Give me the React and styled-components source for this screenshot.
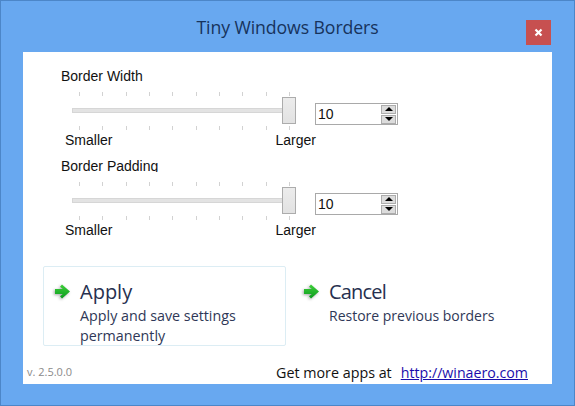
import React from "react";
import styled, { createGlobalStyle } from "styled-components";

const GlobalStyle = createGlobalStyle`
  html, body {
    margin: 0;
    padding: 0;
    background: #68a8f0;
  }
  * {
    box-sizing: border-box;
  }
`;

const Window = styled.div`
  width: 575px;
  height: 406px;
  background: #68a8f0;
  border: 1px solid #4c86c8;
  padding: 0 22px 21px 22px;
  display: flex;
  flex-direction: column;
`;

const TitleBar = styled.header`
  height: 51px;
  flex: none;
  display: grid;
  grid-template-columns: 1fr auto 1fr;
  align-items: center;
`;

const Title = styled.h1`
  grid-column: 2;
  margin: 0;
  padding-top: 1px;
  font-family: "Open Sans", "Noto Sans", sans-serif;
  font-size: 17.7px;
  font-weight: 400;
  color: #17335c;
  letter-spacing: -0.1px;
`;

const CloseButton = styled.button`
  grid-column: 3;
  justify-self: end;
  align-self: end;
  width: 25px;
  height: 25px;
  margin: 0 1px 7px 0;
  padding: 0;
  border: none;
  background: #c75050;
  display: flex;
  align-items: center;
  justify-content: center;
`;

const Panel = styled.main`
  flex: 1;
  background: #fff;
  padding: 16px 0 0 38px;
  display: flex;
  flex-direction: column;
`;

const Group = styled.section`
  height: ${(p) => (p.$last ? "91px" : "90px")};
  flex: none;
  display: flex;
  flex-direction: column;
`;

const GroupLabel = styled.div`
  height: ${(p) => (p.$clip ? "14px" : "17px")};
  margin-bottom: ${(p) => (p.$clip ? "3px" : "0")};
  overflow: hidden;
  font-family: "Liberation Sans", Arial, sans-serif;
  font-size: 14px;
  line-height: 16px;
  color: #111;
`;

const SliderRow = styled.div`
  display: flex;
  align-items: flex-start;
  margin-top: 5px;
  padding-left: 11px;
`;

const Slider = styled.div`
  position: relative;
  width: 224px;
  height: 42px;
  display: flex;
  flex-direction: column;
  justify-content: space-between;
  padding: 2px 0;
`;

const TickRow = styled.div`
  display: flex;
  justify-content: space-between;
  width: 211px;
  margin-left: 7px;
`;

const Tick = styled.span`
  width: 1px;
  height: 4px;
  background: #d2d2d2;
`;

const Track = styled.div`
  position: absolute;
  left: 0;
  right: 13px;
  top: 18px;
  height: 5px;
  background: #e3e3e3;
  border: 1px solid #d6d6d6;
`;

const Thumb = styled.div`
  position: absolute;
  right: 0;
  top: 7px;
  width: 14px;
  height: 27px;
  background: linear-gradient(#ececec, #e2e2e2);
  border: 1px solid #acacac;
`;

const SpinBox = styled.div`
  width: 83px;
  height: 22px;
  margin: 13px 0 0 19px;
  border: 1px solid #a9a9a9;
  background: #fff;
  display: flex;
  align-items: center;
  justify-content: space-between;
  padding: 0 1px 0 2px;
`;

const SpinValue = styled.span`
  font-family: "Liberation Sans", Arial, sans-serif;
  font-size: 14px;
  color: #111;
`;

const SpinButtons = styled.div`
  display: flex;
  flex-direction: column;
  gap: 1px;
  width: 15px;
`;

const SpinButton = styled.div`
  height: 9px;
  background: #dcdcdc;
  border: 1px solid #acacac;
  display: flex;
  align-items: center;
  justify-content: center;
`;

const Arrowhead = styled.span`
  width: 0;
  height: 0;
  border-left: 4px solid transparent;
  border-right: 4px solid transparent;
  ${(p) =>
    p.$down ? "border-top: 4px solid #000;" : "border-bottom: 4px solid #000;"}
`;

const Captions = styled.div`
  display: flex;
  justify-content: space-between;
  width: 251px;
  margin-left: 4px;
  font-family: "Liberation Sans", Arial, sans-serif;
  font-size: 14px;
  line-height: 16px;
  color: #111;
`;

const Actions = styled.div`
  display: flex;
  margin: 17px 0 0 -18px;
  height: 80px;
  flex: none;
`;

const Action = styled.div`
  width: ${(p) => (p.$boxed ? "243px" : "auto")};
  height: 80px;
  margin-left: ${(p) => (p.$boxed ? "0" : "6px")};
  border: 1px solid ${(p) => (p.$boxed ? "#dcedf4" : "transparent")};
  border-radius: 2px;
  display: flex;
  padding: 11px 0 0 9px;
  gap: 9px;
`;

const ArrowIcon = styled.svg`
  width: 18px;
  height: 16px;
  flex: none;
  margin-top: 6px;
  filter: drop-shadow(-1px 1px 1.5px rgba(0, 0, 0, 0.35));
`;

const ActionText = styled.div`
  font-family: "Open Sans", "Noto Sans", sans-serif;
  color: #27304f;
`;

const ActionTitle = styled.div`
  font-size: 20px;
  line-height: 27px;
  letter-spacing: ${(p) => (p.$tight ? "-0.8px" : "0")};
`;

const ActionDesc = styled.div`
  font-size: ${(p) => (p.$wide ? "14.3px" : "14px")};
  line-height: 20px;
  margin-top: 1px;
  color: #2f3857;
`;

const Footer = styled.footer`
  display: flex;
  align-items: center;
  justify-content: space-between;
  margin: 15px 24px 0 -34px;
  font-family: "Open Sans", "Noto Sans", sans-serif;
`;

const Version = styled.span`
  font-size: 11px;
  color: #8a8a8a;
`;

const MoreApps = styled.span`
  display: flex;
  gap: 9px;
  margin-top: 2px;
  font-size: 14.3px;
  color: #111;
`;

const Link = styled.a`
  font-size: 14.2px;
  color: #1a0dab;
  text-decoration: underline;
`;

function Arrow() {
  return (
    <ArrowIcon viewBox="0 0 18 16">
      <defs>
        <linearGradient id="arrowFill" x1="0" y1="0" x2="0" y2="1">
          <stop offset="0" stopColor="#3fd03a" />
          <stop offset="1" stopColor="#0a9a1e" />
        </linearGradient>
      </defs>
      <path
        d="M9 0.5 L17 7.5 L9 14.5 L7 12.2 L9.8 10 L2 10 L2 5 L9.8 5 L7 2.8 Z"
        fill="url(#arrowFill)"
      />
    </ArrowIcon>
  );
}

function SliderGroup({ label, clip }) {
  const ticks = Array.from({ length: 10 });
  return (
    <Group $last={clip}>
      <GroupLabel $clip={clip}>{label}</GroupLabel>
      <SliderRow>
        <Slider>
          <TickRow>
            {ticks.map((_, i) => (
              <Tick key={i} />
            ))}
          </TickRow>
          <Track />
          <Thumb />
          <TickRow>
            {ticks.map((_, i) => (
              <Tick key={i} />
            ))}
          </TickRow>
        </Slider>
        <SpinBox>
          <SpinValue>10</SpinValue>
          <SpinButtons>
            <SpinButton>
              <Arrowhead />
            </SpinButton>
            <SpinButton>
              <Arrowhead $down />
            </SpinButton>
          </SpinButtons>
        </SpinBox>
      </SliderRow>
      <Captions>
        <span>Smaller</span>
        <span>Larger</span>
      </Captions>
    </Group>
  );
}

export default function App() {
  return (
    <>
      <GlobalStyle />
      <Window>
        <TitleBar>
          <Title>Tiny Windows Borders</Title>
          <CloseButton aria-label="Close">
            <svg width="9" height="9" viewBox="0 0 9 9">
              <path d="M1.5 1.5 L7.5 7.5 M7.5 1.5 L1.5 7.5" stroke="#fff" strokeWidth="2.2" />
            </svg>
          </CloseButton>
        </TitleBar>
        <Panel>
          <SliderGroup label="Border Width" />
          <SliderGroup label="Border Padding" clip />
          <Actions>
            <Action $boxed>
              <Arrow />
              <ActionText>
                <ActionTitle>Apply</ActionTitle>
                <ActionDesc $wide>
                  Apply and save settings
                  <br />
                  permanently
                </ActionDesc>
              </ActionText>
            </Action>
            <Action>
              <Arrow />
              <ActionText>
                <ActionTitle $tight>Cancel</ActionTitle>
                <ActionDesc>Restore previous borders</ActionDesc>
              </ActionText>
            </Action>
          </Actions>
          <Footer>
            <Version>v. 2.5.0.0</Version>
            <MoreApps>
              <span>Get more apps at</span>
              <Link href="#">http://winaero.com</Link>
            </MoreApps>
          </Footer>
        </Panel>
      </Window>
    </>
  );
}
